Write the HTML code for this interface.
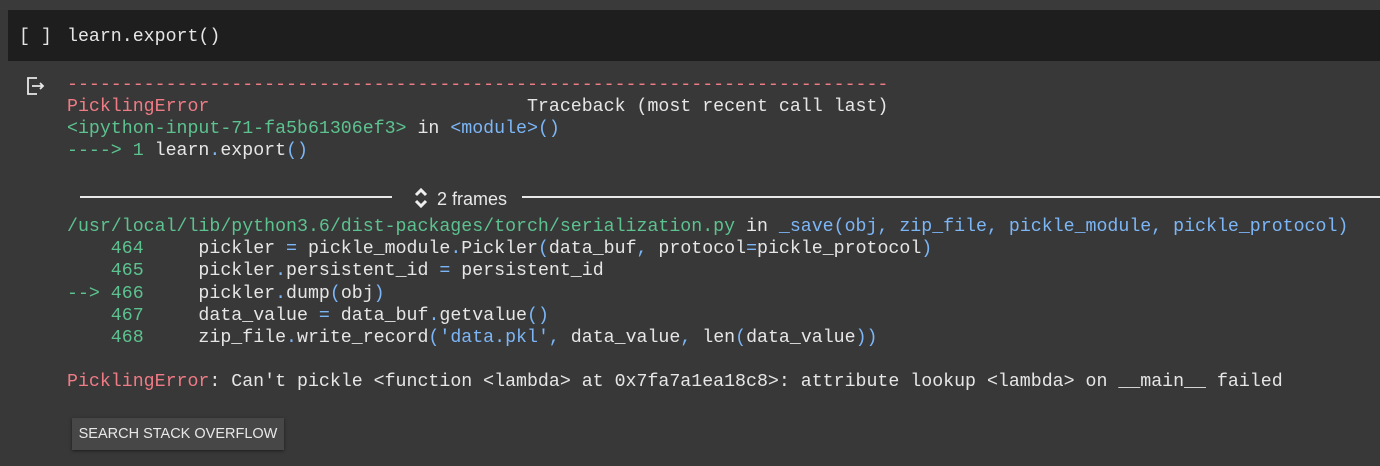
<!DOCTYPE html>
<html><head><meta charset="utf-8"><style>
body{margin:0;width:1380px;height:466px;background:#383838;overflow:hidden;position:relative;font-family:"Liberation Mono","Courier New",monospace;}
.top{position:absolute;left:0;top:0;width:1380px;height:10px;background:#3a3a3a}
.bar{position:absolute;left:8px;top:10px;width:1372px;height:51px;background:#1e1e1e}
.l{position:absolute;left:67px;font-size:18.25px;line-height:22px;white-space:pre;color:#e6e6e6}
.r{color:#ef7b85}.g{color:#5cc28f}.b{color:#7cb6f7}
.hr{position:absolute;height:2px;background:#e8e8e8;top:196px}
.btn{position:absolute;left:72px;top:418px;width:212px;height:32px;background:#474747;box-shadow:0 1px 3px rgba(0,0,0,.5);font-family:"Liberation Sans",sans-serif;font-size:14.5px;color:#e8e8e8;line-height:32px;text-align:center}
</style></head><body>
<div class="top"></div>
<div class="bar"></div>
<div class="l" style="left:19px;top:26px">[ ]</div>
<div class="l" style="top:26px">learn.export()</div>
<svg style="position:absolute;left:26px;top:76px" width="20" height="20" viewBox="0 0 20 20"><path d="M11 2H2v16h9M6 10h11M14 7l3 3-3 3" fill="none" stroke="#e8e8e8" stroke-width="1.8"/></svg>
<div class="l r" style="top:74px">---------------------------------------------------------------------------</div>
<div class="l" style="top:96px"><span class="r">PicklingError</span>                             Traceback (most recent call last)</div>
<div class="l" style="top:118px"><span class="g">&lt;ipython-input-71-fa5b61306ef3&gt;</span> in <span class="b">&lt;module&gt;()</span></div>
<div class="l" style="top:140px"><span class="g">----&gt; 1</span> learn<span class="b">.</span>export<span class="b">()</span></div>
<div class="hr" style="left:80px;width:312px"></div>
<svg style="position:absolute;left:413px;top:185px" width="16" height="26" viewBox="0 0 16 26"><path d="M3 10l5-5 5 5M3 16l5 5 5-5" fill="none" stroke="#eee" stroke-width="3"/></svg>
<div style="position:absolute;left:437px;top:188px;font-family:'Liberation Sans',sans-serif;font-size:18px;color:#e8e8e8;line-height:22px">2 frames</div>
<div class="hr" style="left:522px;width:858px"></div>
<div class="l" style="top:216px"><span class="g">/usr/local/lib/python3.6/dist-packages/torch/serialization.py</span> in <span class="b">_save(obj, zip_file, pickle_module, pickle_protocol)</span></div>
<div class="l" style="top:238px"><span class="g">    464</span>     pickler <span class="b">=</span> pickle_module<span class="b">.</span>Pickler<span class="b">(</span>data_buf<span class="b">,</span> protocol<span class="b">=</span>pickle_protocol<span class="b">)</span></div>
<div class="l" style="top:260px"><span class="g">    465</span>     pickler<span class="b">.</span>persistent_id <span class="b">=</span> persistent_id</div>
<div class="l" style="top:283px"><span class="g">--&gt; 466</span>     pickler<span class="b">.</span>dump<span class="b">(</span>obj<span class="b">)</span></div>
<div class="l" style="top:305px"><span class="g">    467</span>     data_value <span class="b">=</span> data_buf<span class="b">.</span>getvalue<span class="b">()</span></div>
<div class="l" style="top:327px"><span class="g">    468</span>     zip_file<span class="b">.</span>write_record<span class="b">(</span><span class="b">'data.pkl'</span><span class="b">,</span> data_value<span class="b">,</span> len<span class="b">(</span>data_value<span class="b">))</span></div>
<div class="l" style="top:371px"><span class="r">PicklingError</span>: Can't pickle &lt;function &lt;lambda&gt; at 0x7fa7a1ea18c8&gt;: attribute lookup &lt;lambda&gt; on __main__ failed</div>
<div class="btn">SEARCH STACK OVERFLOW</div>
</body></html>
